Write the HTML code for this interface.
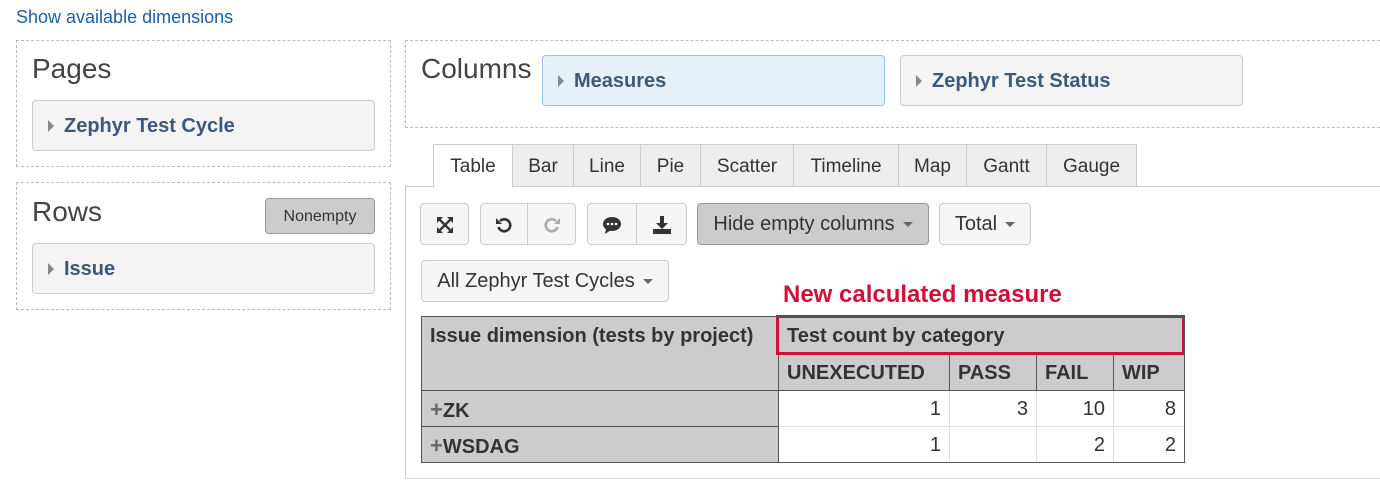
<!DOCTYPE html>
<html><head><style>
*{box-sizing:border-box;margin:0;padding:0}
body{width:1380px;height:498px;background:#fff;font-family:"Liberation Sans",Arial,sans-serif;color:#333;position:relative;overflow:hidden}
.a{position:absolute}
.dash{position:absolute;border:1px dashed #bbb}
.h{position:absolute;font-size:28px;color:#444}
.dim{position:absolute;background:#f4f4f4;border:1px solid #ccc;border-radius:4px;font-weight:bold;font-size:20px;color:#3d5878;padding-left:31px;display:flex;align-items:center;padding-top:2px}
.dim:before{content:"";position:absolute;left:15px;top:50%;margin-top:-6px;border-left:6px solid #888;border-top:6px solid transparent;border-bottom:6px solid transparent}
.tab{position:absolute;top:144px;height:43px;background:#eee;border:1px solid #ccc;font-size:19px;color:#333;display:flex;align-items:center;justify-content:center;padding-top:2px}
.btn{position:absolute;background:#f5f5f5;border:1px solid #ccc;border-radius:4px;font-size:20px;color:#333;display:flex;align-items:center;justify-content:center;padding-top:1px}
.caret{display:inline-block;margin-left:8px;border-top:5px solid #666;border-left:5px solid transparent;border-right:5px solid transparent;vertical-align:middle}
table{position:absolute;left:421px;top:316px;border-collapse:collapse;font-size:20px}
td{border:1px solid #555;height:36px;padding:2px 8px 0;font-weight:bold}
td.g{background:#ccc}
td.n{text-align:right;font-weight:normal;background:#fff;border-color:#ddd}
.pl{color:#666;font-size:22px}
</style></head><body>
<div class="a" style="left:16px;top:7px;font-size:18px;color:#1a5fa8">Show available dimensions</div>

<div class="dash" style="left:16px;top:40px;width:375px;height:127px"></div>
<div class="h" style="left:32px;top:53px">Pages</div>
<div class="dim" style="left:32px;top:100px;width:343px;height:51px">Zephyr Test Cycle</div>

<div class="dash" style="left:16px;top:182px;width:375px;height:128px"></div>
<div class="h" style="left:32px;top:196px">Rows</div>
<div class="btn" style="left:265px;top:198px;width:110px;height:36px;background:#ccc;border-color:#999;font-size:16px">Nonempty</div>
<div class="dim" style="left:32px;top:243px;width:343px;height:51px">Issue</div>

<div class="dash" style="left:405px;top:40px;width:990px;height:88px"></div>
<div class="h" style="left:421px;top:53px">Columns</div>
<div class="dim" style="left:542px;top:55px;width:343px;height:51px;background:#e6f0f9;border-color:#9ec2e6">Measures</div>
<div class="dim" style="left:900px;top:55px;width:343px;height:51px">Zephyr Test Status</div>

<div class="a" style="left:405px;top:186px;width:980px;height:293px;border-left:1px solid #ccc;border-top:1px solid #ccc;border-bottom:1px solid #ddd"></div>
<div class="tab" style="left:433px;width:80px;background:#fff;border-bottom-color:#fff;height:44px">Table</div>
<div class="tab" style="left:512px;width:62px">Bar</div>
<div class="tab" style="left:573px;width:68px">Line</div>
<div class="tab" style="left:640px;width:61px">Pie</div>
<div class="tab" style="left:700px;width:94px">Scatter</div>
<div class="tab" style="left:793px;width:106px">Timeline</div>
<div class="tab" style="left:898px;width:69px">Map</div>
<div class="tab" style="left:966px;width:81px">Gantt</div>
<div class="tab" style="left:1046px;width:91px">Gauge</div>

<div class="btn" style="left:420px;top:203px;width:49px;height:42px"><svg width="18" height="18" viewBox="0 0 18 18"><g stroke="#333" stroke-width="2.4" fill="none"><path d="M4 4L14 14M14 4L4 14"/></g><g fill="#333"><path d="M1 1h6L1 7z"/><path d="M17 1h-6l6 6z"/><path d="M1 17h6L1 11z"/><path d="M17 17h-6l6-6z"/></g></svg></div>
<div class="btn" style="left:480px;top:203px;width:48px;height:42px;border-radius:4px 0 0 4px"><svg width="18" height="18" viewBox="0 0 18 18"><path d="M5 5A6 6 0 1 1 3.5 11" stroke="#333" stroke-width="2.6" fill="none"/><path d="M1 2v6h6z" fill="#333"/></svg></div>
<div class="btn" style="left:527px;top:203px;width:49px;height:42px;border-radius:0 4px 4px 0"><svg width="18" height="18" viewBox="0 0 18 18"><path d="M13 5A6 6 0 1 0 14.5 11" stroke="#aaa" stroke-width="2.6" fill="none"/><path d="M17 2v6h-6z" fill="#aaa"/></svg></div>
<div class="btn" style="left:587px;top:203px;width:50px;height:42px;border-radius:4px 0 0 4px"><svg width="20" height="18"><ellipse cx="10" cy="8" rx="9" ry="7" fill="#333"/><path d="M4 13 L3 18 L9 14Z" fill="#333"/><circle cx="6" cy="8" r="1.3" fill="#fff"/><circle cx="10" cy="8" r="1.3" fill="#fff"/><circle cx="14" cy="8" r="1.3" fill="#fff"/></svg></div>
<div class="btn" style="left:636px;top:203px;width:51px;height:42px;border-radius:0 4px 4px 0"><svg width="20" height="20"><path d="M8 1h4v7h4l-6 6-6-6h4z" fill="#333"/><rect x="1" y="14" width="18" height="5" fill="#333"/></svg></div>
<div class="btn" style="left:697px;top:203px;width:232px;height:42px;background:#ccc;border-color:#999">Hide empty columns<span class="caret"></span></div>
<div class="btn" style="left:939px;top:203px;width:92px;height:42px">Total<span class="caret"></span></div>
<div class="btn" style="left:421px;top:260px;width:248px;height:42px">All Zephyr Test Cycles<span class="caret"></span></div>

<div class="a" style="left:783px;top:281px;font-size:24px;font-weight:bold;color:#d0103a">New calculated measure</div>

<table>
<tr><td class="g" rowspan="2" style="width:357px;vertical-align:top;padding-top:8px;height:74px">Issue dimension (tests by project)</td><td class="g" colspan="4">Test count by category</td></tr>
<tr><td class="g" style="width:171px">UNEXECUTED</td><td class="g" style="width:87px">PASS</td><td class="g" style="width:77px">FAIL</td><td class="g" style="width:71px">WIP</td></tr>
<tr><td class="g"><span class="pl">+</span>ZK</td><td class="n">1</td><td class="n">3</td><td class="n">10</td><td class="n">8</td></tr>
<tr><td class="g"><span class="pl">+</span>WSDAG</td><td class="n">1</td><td class="n"></td><td class="n">2</td><td class="n">2</td></tr>
</table>
<div class="a" style="left:776px;top:315px;width:409px;height:40px;border:3px solid #d0103a"></div>
<div class="a" style="left:421px;top:316px;width:764px;height:147px;border:1px solid #555;pointer-events:none"></div>
</body></html>
